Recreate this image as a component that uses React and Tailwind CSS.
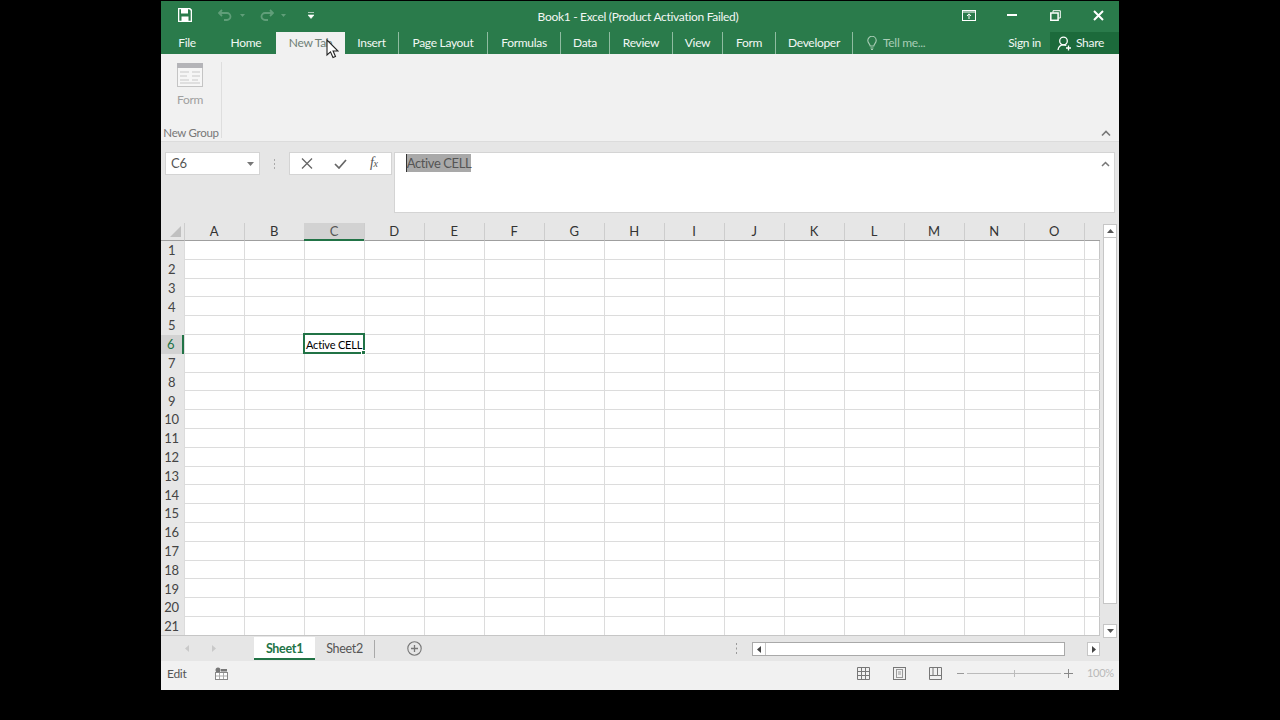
import React from 'react'

const tabs = [
  { label: 'File', w: 'w-[52px]', sep: false },
  { label: 'Home', w: 'w-[63px] pl-[3px]', sep: false },
  { label: 'New Tab', w: 'w-[69px]', active: true },
  { label: 'Insert', w: 'w-[54px]', sep: true },
  { label: 'Page Layout', w: 'w-[89px]', sep: true },
  { label: 'Formulas', w: 'w-[73px]', sep: true },
  { label: 'Data', w: 'w-[49px]', sep: true },
  { label: 'Review', w: 'w-[63px]', sep: true },
  { label: 'View', w: 'w-[50px]', sep: true },
  { label: 'Form', w: 'w-[53px]', sep: true },
  { label: 'Developer', w: 'w-[77px]', sep: true },
]

const columns = 'ABCDEFGHIJKLMNO'.split('')
const rows = Array.from({ length: 21 }, (_, i) => i + 1)

const Ribbon = () => (
  <div className="h-[88px] bg-[#f1f1f1] border-b border-[#dcdcdc] flex relative">
    <div className="w-[60px] flex flex-col items-center">
      <svg className="mt-[8px] ml-[-2px]" width="30" height="26" viewBox="0 0 30 26">
        <rect x="2.5" y="1.5" width="25" height="23" fill="#f6f6f6" stroke="#c4c4c4" />
        <rect x="2" y="1" width="26" height="5" fill="#b4b4b8" />
        <path d="M5 10h9M17 10h8M5 14h7M17 14h8M5 18h9M17 18h6M5 21h20" stroke="#c8c8c8" />
      </svg>
      <span className="mt-[4px] ml-[-2px] text-[12px] leading-[16px] text-[#a0a0a0]">Form</span>
      <span className="mt-[18px] text-[11.5px] leading-[14px] text-[#777] whitespace-nowrap">New Group</span>
    </div>
    <div className="w-px h-[76px] mt-[8px] bg-[#dedede]" />
    <div className="flex-1 flex justify-end items-end pr-[8px] pb-[4px]">
      <svg width="10" height="7" viewBox="0 0 10 7"><path d="M1 5.5l4-4 4 4" fill="none" stroke="#777" strokeWidth="1.6" /></svg>
    </div>
  </div>
)

const TitleBar = () => (
  <div className="h-[31px] pb-[3px] flex items-center relative text-white">
    <div className="flex items-center pl-[17px]">
      <svg width="14" height="14" viewBox="0 0 14 14">
        <path d="M.5.5h11l2 2v11H.5z" fill="none" stroke="#fff" strokeWidth="1.6" />
        <rect x="3" y="1" width="7" height="4.5" fill="#fff" />
        <rect x="3.5" y="8.5" width="7" height="4.5" fill="#fff" />
      </svg>
      <div className="ml-[26px] flex items-center gap-[8px] opacity-30">
        <svg width="14" height="12" viewBox="0 0 14 12"><path d="M4 1L1 4l3 3M1.500 4H9a3.500 3.500 0 010 7H6" fill="none" stroke="#dcefe3" strokeWidth="1.800" /></svg>
        <svg width="5" height="3" viewBox="0 0 5 3"><path d="M0 0h5L2.500 3z" fill="#dcefe3" /></svg>
      </div>
      <div className="ml-[15px] flex items-center gap-[7px] opacity-30">
        <svg width="14" height="12" viewBox="0 0 14 12"><path d="M10 1l3 3-3 3M12.500 4H5a3.500 3.500 0 000 7h3" fill="none" stroke="#dcefe3" strokeWidth="1.800" /></svg>
        <svg width="5" height="3" viewBox="0 0 5 3"><path d="M0 0h5L2.500 3z" fill="#dcefe3" /></svg>
      </div>
      <svg className="ml-[22px]" width="6" height="7" viewBox="0 0 6 7"><path d="M0 .5h6M0 3h6L3 6.500z" fill="#fff" stroke="#fff" strokeWidth=".6" /></svg>
    </div>
    <div className="absolute left-0 right-[4px] top-[8px] text-center text-[12px] leading-[16px] text-[#f2f7f4]">Book1 - Excel (Product Activation Failed)</div>
    <div className="ml-auto flex items-center">
      <svg width="14" height="11" viewBox="0 0 14 11"><rect x=".5" y=".5" width="13" height="10" fill="none" stroke="#fff" /><path d="M1 2h12" stroke="#fff" /><path d="M7 9V4M5 6l2-2.200L9 6" fill="none" stroke="#fff" /></svg>
      <svg className="ml-[31px]" width="11" height="2" viewBox="0 0 11 2"><rect width="10" height="2" fill="#fff" /></svg>
      <svg className="ml-[32px]" width="11" height="11" viewBox="0 0 11 11"><path d="M3 2.500V.7h7.300V8H8.500" fill="none" stroke="#fff" /><rect x=".8" y="3" width="7.300" height="7.300" fill="none" stroke="#fff" strokeWidth="1.500" /></svg>
      <svg className="ml-[32px] mr-[15px]" width="11" height="11" viewBox="0 0 11 11"><path d="M1 1l9 9M10 1l-9 9" stroke="#fff" strokeWidth="2" /></svg>
    </div>
  </div>
)

const TabBar = () => (
  <div className="h-[22px] flex text-[12px] leading-[16px] text-[#f2f7f4]">
    {tabs.map((t) => (
      <div
        key={t.label}
        className={`${t.w} flex items-center justify-center ${t.active ? 'bg-[#f1f1f1] text-[#6f7f76]' : ''} ${t.sep ? 'border-r border-[#8fbca1]' : ''}`}
      >
        {t.label}
      </div>
    ))}
    <div className="flex items-center pl-[14px] gap-[6px] text-[#a9cdb6]">
      <svg width="10" height="14" viewBox="0 0 10 14"><path d="M3.200 10C3 8 .8 7 .8 4.500a4.200 4.200 0 018.400 0C9.200 7 7 8 6.800 10zM3.500 12h3M4 13.500h2" fill="none" stroke="#a9cdb6" strokeWidth="1.100" /></svg>
      Tell me...
    </div>
    <div className="ml-auto flex items-center pr-[9px]">Sign in</div>
    <div className="w-[69px] bg-[#1c6a3b] flex items-center pl-[7px] gap-[4px]">
      <svg width="15" height="15" viewBox="0 0 15 15"><circle cx="6.500" cy="5" r="3.800" fill="none" stroke="#fff" strokeWidth="1.300" /><path d="M1 14c.5-3.500 2.500-5.200 5.500-5.200 1 0 2 .2 2.800.7M11.500 9.500v5M9 12h5" fill="none" stroke="#fff" strokeWidth="1.300" /></svg>
      Share
    </div>
  </div>
)

const FormulaBar = () => (
  <div className="h-[81px] bg-[#e6e6e6] flex pt-[10px] pl-[4px] pr-[4px]">
    <div className="w-[95px] h-[23px] bg-white border border-[#d4d4d4] flex items-center justify-between pl-[5px] pr-[5px] text-[13px] text-[#555]">
      C6
      <svg width="7" height="4" viewBox="0 0 7 4"><path d="M0 0h7L3.500 4z" fill="#777" /></svg>
    </div>
    <div className="w-[29px] h-[23px] flex items-center justify-center">
      <svg width="3" height="10" viewBox="0 0 3 10"><path d="M1.500 0v2M1.500 4v2M1.500 8v2" stroke="#aaa" /></svg>
    </div>
    <div className="w-[103px] h-[23px] bg-white border border-[#d4d4d4] flex items-center pl-[11px] gap-[21px]">
      <svg width="12" height="11" viewBox="0 0 12 11"><path d="M1 .5l10 10M11 .5l-10 10" stroke="#666" strokeWidth="1.300" /></svg>
      <svg width="13" height="10" viewBox="0 0 13 10"><path d="M1 5l4 4 7-8" fill="none" stroke="#666" strokeWidth="1.700" /></svg>
      <span className="ml-[2px] text-[14px] leading-[14px] italic text-[#555] font-['Liberation_Serif',serif]">f<span className="text-[10px]">x</span></span>
    </div>
    <div className="ml-[2px] w-[722px] h-[61px] bg-white border border-[#d4d4d4] flex justify-between pl-[11px] pr-[4px] pt-[1px]">
      <span className="h-[18px] bg-[#a9a9a9] border-l border-[#333] text-[13px] leading-[18px] tracking-[-0.4px] text-[#555]">Active CELL</span>
      <svg className="mt-[7px]" width="9" height="6" viewBox="0 0 9 6"><path d="M1 5l3.500-3.500L8 5" fill="none" stroke="#777" strokeWidth="1.500" /></svg>
    </div>
  </div>
)

const Sheet = () => (
  <div className="flex-1 flex bg-white min-h-0">
    <div className="w-[939px] grid grid-cols-[23px_repeat(15,60px)_16px] grid-rows-[18px_repeat(21,18.81px)] border-r border-[#c6c6c6]">
      <div className="bg-[#e6e6e6] border-b border-[#9f9f9f] flex items-end justify-end pr-[3px] pb-[3px]">
        <svg width="11" height="11" viewBox="0 0 11 11"><path d="M11 0v11H0z" fill="#c0c0c0" /></svg>
      </div>
      {columns.map((c) => (
        <div
          key={c}
          className={`flex items-center justify-center text-[13px] pt-[1px] ${c === 'C' ? 'bg-[#d2d2d2] border-b-2 border-[#217346] text-[#555]' : 'bg-[#e6e6e6] border-b border-[#9f9f9f] border-l-[#cdcdcd] border-l pr-[1px] text-[#333]'}`}
        >
          {c}
        </div>
      ))}
      <div className="bg-[#e6e6e6] border-b border-l border-[#9f9f9f] border-l-[#cdcdcd]" />
      {rows.map((r) => (
        <React.Fragment key={r}>
          <div
            className={`flex items-center justify-center text-[13px] pr-[2px] pt-[1px] ${r === 6 ? 'bg-[#d2d2d2] border-r-2 border-[#217346] text-[#217346]' : 'bg-[#e6e6e6] text-[#444]'}`}
          >
            {r}
          </div>
          {columns.map((c) => (
            <div key={c} className="relative border-l border-b border-[#dcdcdc]">
              {r === 6 && c === 'C' && (
                <div className="absolute left-[-2px] top-[-2px] w-[62px] h-[21px] border-2 border-[#217346] bg-white flex items-center pl-[1px] pt-[3px] text-[11px] tracking-[-0.2px] text-black whitespace-nowrap z-10">
                  Active CELL
                  <span className="absolute right-[-3px] bottom-[-3px] w-[5px] h-[5px] bg-[#217346] border border-white" />
                </div>
              )}
            </div>
          ))}
          <div className="border-l border-b border-[#dcdcdc]" />
        </React.Fragment>
      ))}
    </div>
    <div className="w-[19px] bg-[#e6e6e6] flex flex-col items-center pt-[1px] pl-[1px] relative z-10 mb-[-3px]">
      <div className="w-[14px] h-[14px] bg-white border border-[#c6c6c6] flex items-center justify-center">
        <svg width="7" height="4" viewBox="0 0 7 4"><path d="M0 4h7L3.500 0z" fill="#555" /></svg>
      </div>
      <div className="w-[14px] h-[366px] bg-white border border-[#c6c6c6] border-t-0" />
      <div className="mt-auto w-[14px] h-[14px] bg-white border border-[#c6c6c6] flex items-center justify-center">
        <svg width="7" height="4" viewBox="0 0 7 4"><path d="M0 0h7L3.500 4z" fill="#555" /></svg>
      </div>
    </div>
  </div>
)

const SheetTabs = () => (
  <div className="h-[26px] bg-[#e6e6e6] border-t border-[#c6c6c6] flex items-center text-[12.5px] relative">
    <svg className="ml-[24px]" width="4" height="7" viewBox="0 0 4 7"><path d="M4 0v7L0 3.500z" fill="#c9c9c9" /></svg>
    <svg className="ml-[23px]" width="4" height="7" viewBox="0 0 4 7"><path d="M0 0v7l4-3.500z" fill="#c9c9c9" /></svg>
    <div className="ml-[38px] mt-[1px] w-[61px] h-[23px] self-start bg-white border-b-2 border-[#217346] flex items-center justify-center font-bold text-[#217346] pt-[3px]">Sheet1</div>
    <div className="w-[60px] h-[18px] border-r border-[#a9a9a9] flex items-center justify-center text-[#555] pt-[2px]">Sheet2</div>
    <svg className="ml-[32px]" width="15" height="15" viewBox="0 0 15 15"><circle cx="7.500" cy="7.500" r="6.700" fill="none" stroke="#777" strokeWidth="1.100" /><path d="M7.500 4v7M4 7.500h7" stroke="#777" strokeWidth="1.300" /></svg>
    <svg className="ml-[313px]" width="3" height="11" viewBox="0 0 3 11"><path d="M1.500 0v2M1.500 4.500v2M1.500 9v2" stroke="#999" /></svg>
    <div className="ml-[14px] mt-[1px] w-[313px] h-[14px] bg-white border border-[#a9a9a9] flex">
      <div className="w-[13px] border-r border-[#c6c6c6] flex items-center justify-center">
        <svg width="4" height="7" viewBox="0 0 4 7"><path d="M4 0v7L0 3.500z" fill="#444" /></svg>
      </div>
    </div>
    <div className="ml-[22px] mt-[1px] w-[13px] h-[14px] bg-white border border-[#c6c6c6] flex items-center justify-center">
      <svg width="4" height="7" viewBox="0 0 4 7"><path d="M0 0v7l4-3.500z" fill="#444" /></svg>
    </div>
  </div>
)

const StatusBar = () => (
  <div className="h-[29px] bg-[#f1f1f1] flex items-center text-[12px] text-[#555] pb-[4px]">
    <span className="ml-[6px] w-[21px]">Edit</span>
    <svg className="ml-[27px]" width="13" height="13" viewBox="0 0 13 13">
      <circle cx="3" cy="3" r="2.500" fill="#777" />
      <rect x="6" y="2" width="6" height="2.500" fill="#777" />
      <rect x=".5" y="5.500" width="12" height="7" fill="#fff" stroke="#888" />
      <path d="M4.500 6v6M8.500 6v6M1 9h11" stroke="#aaa" />
    </svg>
    <svg className="ml-[629px]" width="13" height="13" viewBox="0 0 13 13"><path d="M.5.500h12v12H.5zM.5 4.500h12M.5 8.500h12M4.500.500v12M8.500.500v12" fill="none" stroke="#777" /></svg>
    <svg className="ml-[23px]" width="13" height="13" viewBox="0 0 13 13"><rect x=".5" y=".5" width="12" height="12" fill="none" stroke="#777" /><rect x="3.500" y="2.500" width="6" height="8" fill="none" stroke="#999" /><path d="M5 5h3M5 7h3" stroke="#999" /></svg>
    <svg className="ml-[23px]" width="13" height="13" viewBox="0 0 13 13"><path d="M.5.500h12v12H.5z" fill="none" stroke="#777" /><path d="M.5 8.500h3.500V.5M8.500.5v8h4M4 8.500h4.500" fill="none" stroke="#777" /></svg>
    <span className="ml-[15px] w-[7px] h-px bg-[#999]" />
    <div className="ml-[3px] w-[94px] h-px bg-[#bbb] relative">
      <span className="absolute left-[47px] top-[-3px] w-px h-[7px] bg-[#bbb]" />
    </div>
    <svg className="ml-[3px]" width="9" height="9" viewBox="0 0 9 9"><path d="M4.500 0v9M0 4.500h9" stroke="#888" /></svg>
    <span className="ml-[14px] text-[11px] text-[#b9b9b9]">100%</span>
  </div>
)

export default function App() {
  return (
    <div className="w-[1280px] h-[720px] bg-black overflow-hidden pl-[161px] relative font-['Lato',sans-serif] tracking-[-0.3px]">
      <div className="w-[958px] h-[690px] flex flex-col">
        <div className="h-[53px] mt-[1px] bg-[#2a7b4b]">
          <TitleBar />
          <TabBar />
        </div>
        <Ribbon />
        <FormulaBar />
        <Sheet />
        <SheetTabs />
        <StatusBar />
      </div>
      {/* mouse pointer over the New Tab label */}
      <svg className="absolute left-[326px] top-[39px]" width="13" height="20" viewBox="0 0 13 20">
        <path d="M1 1v15l3.500-3.200L7 18.500l2.500-1-2.400-5.500H12z" fill="#fff" stroke="#222" strokeWidth="1.100" />
      </svg>
    </div>
  )
}
